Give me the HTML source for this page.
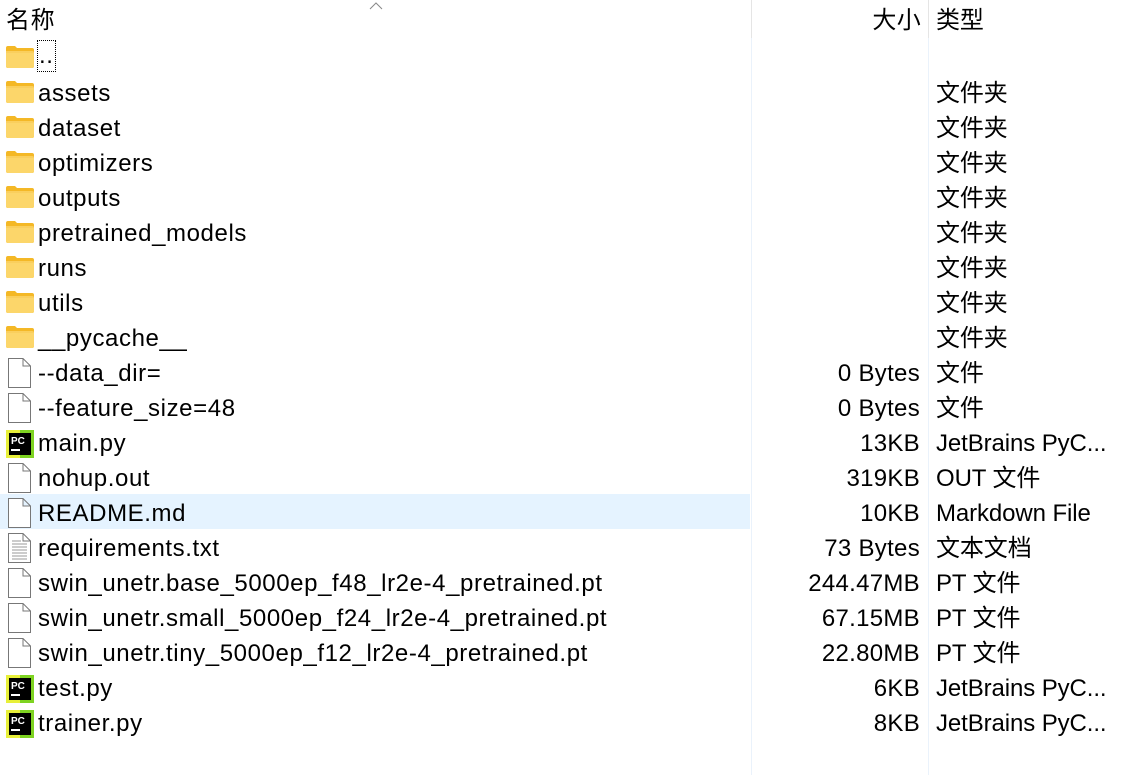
<!DOCTYPE html>
<html><head><meta charset="utf-8"><style>
body{margin:0;width:1123px;height:775px;background:#fff;overflow:hidden;position:relative;font-family:"Liberation Sans","Noto Sans CJK SC",sans-serif;font-size:24px;letter-spacing:0.6px;color:#000}
.r{position:absolute;left:0;width:1123px;height:35px;line-height:37px}
.n{position:absolute;left:38px;white-space:nowrap}
.s{position:absolute;right:203px;white-space:nowrap;letter-spacing:0.3px}
.t{position:absolute;left:936px;white-space:nowrap;letter-spacing:-0.1px}
.ic{position:absolute;left:6px;top:6px}
</style></head><body>
<div style="position:absolute;left:751px;top:0;width:1px;height:38px;background:#e5e5e5"></div>
<div style="position:absolute;left:751px;top:38px;width:1px;height:737px;background:#eaf2fb"></div>
<div style="position:absolute;left:928px;top:0;width:1px;height:38px;background:#e5e5e5"></div>
<div style="position:absolute;left:928px;top:38px;width:1px;height:737px;background:#eaf2fb"></div>
<div class="r" style="top:2px"><span style="position:absolute;left:6px">名称</span><span class="s" style="right:202px">大小</span><span class="t">类型</span></div>
<svg style="position:absolute;left:369px;top:2px" width="14" height="8"><path d="M1 7 L7 1 L13 7" fill="none" stroke="#888" stroke-width="1"/></svg>
<div id="rows"></div>
<script>
var F='<svg class="ic" width="28" height="22"><path d="M0 2 Q0 0 2 0 H9 L11 2 H26 Q28 2 28 4 V20 Q28 22 26 22 H2 Q0 22 0 20Z" fill="#f4b826"/><path d="M0 5 H26 Q28 5 28 7 V20 Q28 22 26 22 H2 Q0 22 0 20Z" fill="#fcd66a"/><path d="M0 6 H28" stroke="#f8c850"/></svg>';
var D='<svg class="ic" style="left:8px;top:3px" width="24" height="30"><path d="M0.5 0.5 H15 L22.5 8 V29.5 H0.5Z M15 0.5 V8 H22.5" fill="#fff" stroke="#777"/></svg>';
var T='<svg class="ic" style="left:8px;top:3px" width="24" height="30"><path d="M0.5 0.5 H15 L22.5 8 V29.5 H0.5Z M15 0.5 V8 H22.5" fill="#fff" stroke="#777"/><path d="M4 8H13M4 11H19M4 14H19M4 17H19M4 20H19M4 23H19M4 26H19" stroke="#999"/></svg>';
var P='<svg class="ic" style="top:5px" width="28" height="28"><rect width="28" height="28" fill="#7ed321"/><rect x="0" y="0" width="14" height="28" fill="#e8f03a"/><rect x="3" y="3" width="22" height="22" fill="#000"/><text x="5" y="14" font-size="10" font-weight="bold" fill="#fff" font-family="Liberation Sans" letter-spacing="0">PC</text><rect x="5" y="19" width="9" height="2" fill="#fff"/></svg>';
var rows=[[F,'..','',''],[F,'assets','','文件夹'],[F,'dataset','','文件夹'],[F,'optimizers','','文件夹'],[F,'outputs','','文件夹'],[F,'pretrained_models','','文件夹'],[F,'runs','','文件夹'],[F,'utils','','文件夹'],[F,'__pycache__','','文件夹'],[D,'--data_dir=','0 Bytes','文件'],[D,'--feature_size=48','0 Bytes','文件'],[P,'main.py','13KB','JetBrains PyC...'],[D,'nohup.out','319KB','OUT 文件'],[D,'README.md','10KB','Markdown File'],[T,'requirements.txt','73 Bytes','文本文档'],[D,'swin_unetr.base_5000ep_f48_lr2e-4_pretrained.pt','244.47MB','PT 文件'],[D,'swin_unetr.small_5000ep_f24_lr2e-4_pretrained.pt','67.15MB','PT 文件'],[D,'swin_unetr.tiny_5000ep_f12_lr2e-4_pretrained.pt','22.80MB','PT 文件'],[P,'test.py','6KB','JetBrains PyC...'],[P,'trainer.py','8KB','JetBrains PyC...']];
var h='';rows.forEach(function(r,i){var top=40+35*i;
h+=(i==13?'<div style="position:absolute;left:0;top:'+(top-1)+'px;width:750px;height:35px;background:#e5f3ff"></div>':'');
var nm=i==0?'<span class="n" style="outline:1px dotted #000;line-height:30px;top:1px;padding:0 1px">..</span>':'<span class="n">'+r[1]+'</span>';
h+='<div class="r" style="top:'+top+'px">'+r[0]+nm+'<span class="s">'+r[2]+'</span><span class="t">'+r[3]+'</span></div>';});
document.getElementById('rows').innerHTML=h;
</script>
</body></html>
